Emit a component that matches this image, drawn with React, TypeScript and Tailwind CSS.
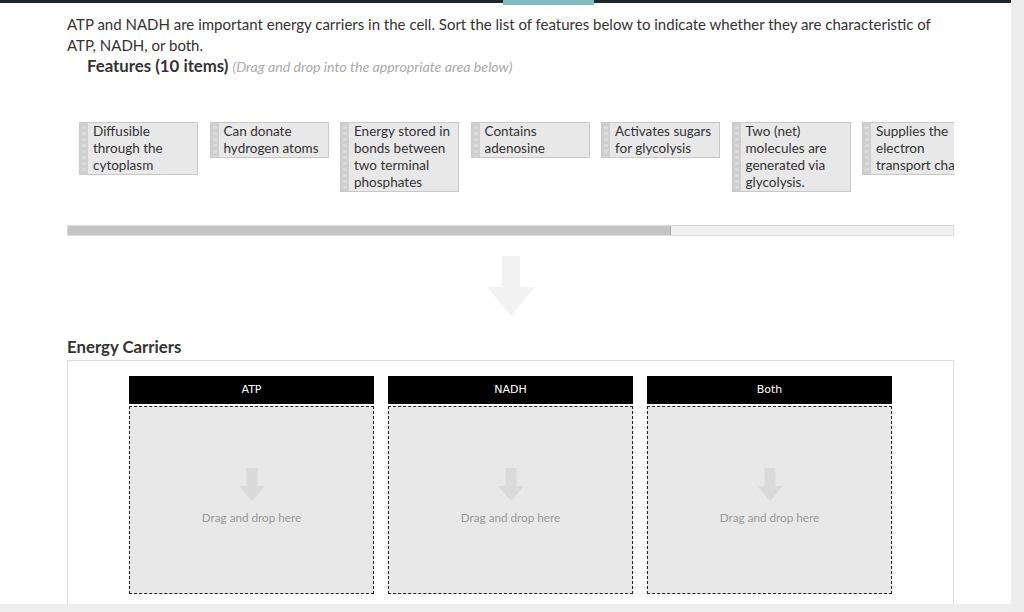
const features = [
  ["Diffusible", "through the", "cytoplasm"],
  ["Can donate", "hydrogen atoms"],
  ["Energy stored in", "bonds between", "two terminal", "phosphates"],
  ["Contains", "adenosine"],
  ["Activates sugars", "for glycolysis"],
  ["Two (net)", "molecules are", "generated via", "glycolysis."],
  ["Supplies the", "electron", "transport chain"],
];

const carriers = ["ATP", "NADH", "Both"];

export default function App() {
  return (
    <div
      className="flex h-[612px] w-[1024px] overflow-hidden bg-white text-[#333]"
      style={{ fontFamily: "Lato, 'Open Sans', sans-serif" }}
    >
      <div className="flex min-w-0 flex-1 flex-col">
        <div className="flex h-[5px] items-start">
          <div className="h-[3px] w-[503px] bg-[#1d2628]" />
          <div className="h-[5px] w-[91px] bg-[#7fbdbf]" />
          <div className="h-[3px] flex-1 bg-[#1d2628]" />
        </div>

        <div className="flex flex-1 flex-col pl-[67px] pr-[57px]">
          <p className="mt-[9px] text-[15px] leading-[21px] text-[#333]">
            ATP and NADH are important energy carriers in the cell. Sort the list of features below to indicate whether they are characteristic of ATP, NADH, or both.
          </p>
          <div className="ml-[20px] flex items-baseline gap-[4px]">
            <span className="text-[16.8px] font-bold leading-[19px] text-[#333]">Features (10 items)</span>
            <span className="text-[14.2px] italic leading-[19px] text-[#aaa]">(Drag and drop into the appropriate area below)</span>
          </div>

          <div className="ml-[12px] mt-[46px] flex items-start gap-[11.5px] overflow-hidden">
            {features.map((lines) => (
              <div key={lines[0]} className="flex w-[119px] shrink-0 border border-[#c8c8c8] bg-[#e8e8e8]">
                <div className="w-[8px] shrink-0 bg-[#cfcfcf] bg-[repeating-linear-gradient(to_bottom,#cfcfcf_0px,#cfcfcf_3px,#dbdbdb_3px,#dbdbdb_6px)] bg-[length:4px_100%] bg-center bg-no-repeat" />
                <div className="whitespace-nowrap pl-[5px] text-[13.5px] leading-[17px] text-[#333]">
                  {lines.map((l) => (
                    <div key={l}>{l}</div>
                  ))}
                </div>
              </div>
            ))}
          </div>

          <div className="mt-[33px] flex h-[11px] border border-[#dcdcdc]">
            <div className="w-[603px] border-r border-[#aaa] bg-[#c4c4c4]" />
            <div className="flex-1 bg-[#f0f0f0]" />
          </div>

          <div className="mt-[20px] flex justify-center">
            <svg viewBox="0 0 48 60" className="h-[60px] w-[48px] text-[#f2f2f2]">
              <path d="M15 0h18v31h15L24 60 0 31h15z" fill="currentColor" />
            </svg>
          </div>

          <h2 className="mt-[20px] text-[16.8px] font-bold leading-[22px] text-[#333]">Energy Carriers</h2>

          <div className="mt-[2px] flex flex-1 justify-center gap-[14px] border border-b-0 border-[#dcdcdc] pr-[61px] pl-[61px] pt-[15px]">
            {carriers.map((c) => (
              <div key={c} className="flex w-[245px] flex-col">
                <div
                  className="flex h-[28px] items-center justify-center bg-black text-[11px] text-white"
                  style={{ fontFamily: "'DejaVu Sans', sans-serif" }}
                >
                  {c}
                </div>
                <div className="mt-[2px] flex h-[188px] flex-col items-center border border-dashed border-[#222] bg-[#e8e8e8] pt-[61px]">
                  <svg viewBox="0 0 26 33" className="h-[33px] w-[26px] text-[#dadada]">
                    <path d="M7.5 0h11v18H26L13 33 0 18h7.5z" fill="currentColor" />
                  </svg>
                  <span className="mt-[8px] text-[11.7px] leading-[16px] text-[#999]">Drag and drop here</span>
                </div>
              </div>
            ))}
          </div>
        </div>
        <div className="h-[8px] bg-[#eeeeee]" />
      </div>
      <div className="w-[13px] bg-[#ededed]" />
    </div>
  );
}
